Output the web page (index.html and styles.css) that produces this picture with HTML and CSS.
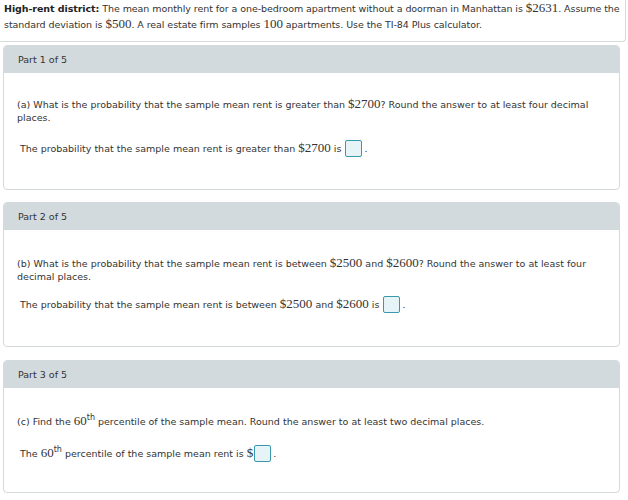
FILE: index.html
```html
<!DOCTYPE html>
<html>
<head>
<meta charset="utf-8">
<link rel="stylesheet" href="styles.css">
</head>
<body>
<div class="intro">
  <b>High-rent district:</b> The mean monthly rent for a one-bedroom apartment without a doorman in Manhattan is <span class="num">$2631</span>. Assume the standard deviation is <span class="num">$500</span>. A real estate firm samples <span class="num">100</span> apartments. Use the TI-84 Plus calculator.
</div>

<div class="card card1">
  <div class="card-head">Part 1 of 5</div>
  <div class="card-body">
    <p class="q">(a) What is the probability that the sample mean rent is greater than <span class="num">$2700</span>? Round the answer to at least four decimal places.</p>
    <p class="a">The probability that the sample mean rent is greater than <span class="num">$2700</span> is <span class="box"></span>.</p>
  </div>
</div>

<div class="card card2">
  <div class="card-head">Part 2 of 5</div>
  <div class="card-body">
    <p class="q">(b) What is the probability that the sample mean rent is between <span class="num">$2500</span> and <span class="num">$2600</span>? Round the answer to at least four decimal places.</p>
    <p class="a">The probability that the sample mean rent is between <span class="num">$2500</span> and <span class="num">$2600</span> is <span class="box"></span>.</p>
  </div>
</div>

<div class="card card3">
  <div class="card-head">Part 3 of 5</div>
  <div class="card-body">
    <p class="q">(c) Find the <span class="num">60</span><sup>th</sup> percentile of the sample mean. Round the answer to at least two decimal places.</p>
    <p class="a">The <span class="num">60</span><sup>th</sup> percentile of the sample mean rent is <span class="num">$</span><span class="box"></span>.</p>
  </div>
</div>
</body>
</html>
```

FILE: styles.css
```css
html, body {
  margin: 0;
  padding: 0;
  background: #ffffff;
}
body {
  font-family: "DejaVu Sans", Verdana, sans-serif;
  font-size: 9.5px;
  color: #333333;
  width: 628px;
  height: 500px;
  overflow: hidden;
}
.intro {
  box-sizing: border-box;
  width: 626px;
  height: 42px;
  padding: 1px 2px 0 4px;
  line-height: 16px;
  letter-spacing: -0.07px;
  border-right: 1px solid #d6dadc;
  border-bottom: 1px solid #d6dadc;
  border-bottom-right-radius: 4px;
}
.intro b {
  font-weight: bold;
  color: #222;
}
.num {
  font-family: "Liberation Serif", "Times New Roman", serif;
  font-size: 13px;
  line-height: 1;
  letter-spacing: 0;
  color: #333;
}
.card {
  margin-left: 3px;
  width: 617px;
  box-sizing: border-box;
  border: 1px solid #d4d9dc;
  border-radius: 4px;
  overflow: hidden;
}
.card1 { margin-top: 3px; height: 145px; }
.card2 { margin-top: 12px; height: 145px; }
.card3 { margin-top: 13px; height: 133px; }
.card-head {
  background: #d3dadd;
  height: 27px;
  line-height: 28px;
  padding-left: 14px;
  color: #333;
}
.card-body {
  padding: 24px 14px 0 13px;
}
.card2 .card-body { padding-top: 26px; }
.card3 .card-body { padding-top: 26px; }
.q {
  margin: 0;
  line-height: 13px;
}
.a {
  margin: 16px 0 0 3px;
  line-height: 18px;
}
.card2 .a { margin-top: 13px; }
.card3 .a { margin-top: 17px; }
sup {
  font-size: 8px;
  vertical-align: 5px;
  line-height: 1;
}
.box {
  display: inline-block;
  width: 15px;
  height: 15px;
  border: 1px solid #3a98ad;
  border-radius: 2px;
  background: #e6f4f8;
  vertical-align: -5px;
  margin-left: 1px;
  margin-right: 2px;
}
```
